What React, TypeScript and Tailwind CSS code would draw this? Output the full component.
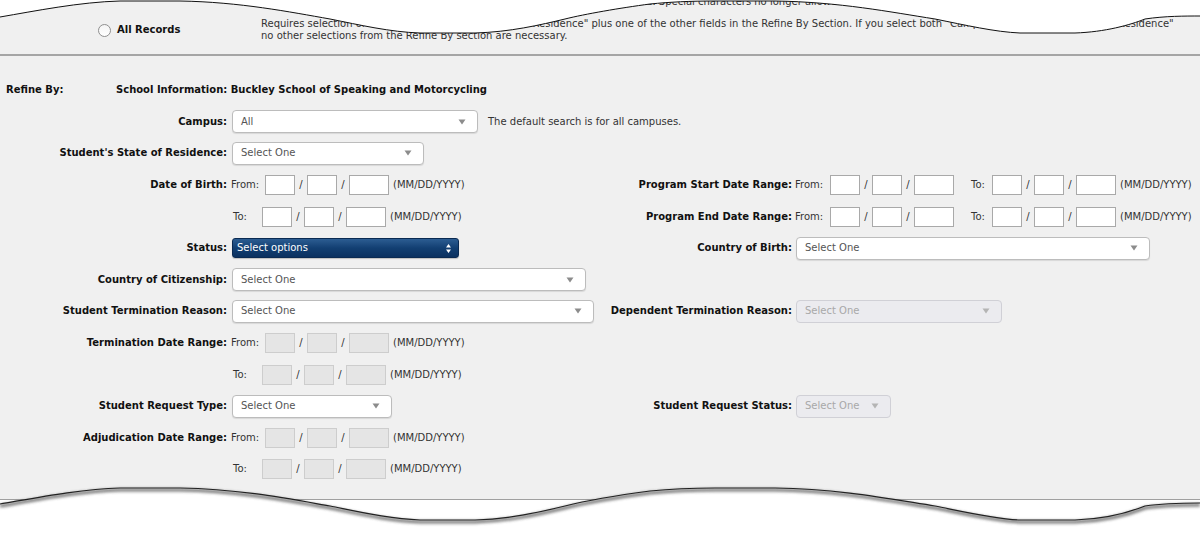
import React from "react";

const Caret = ({ color = "#8c8c8c" }: { color?: string }) => (
  <svg width="8" height="6" viewBox="0 0 8 6">
    <path d="M0.5 0.5h7L4 5.5z" fill={color} />
  </svg>
);

const Select = ({
  className,
  text = "Select One",
  disabled = false,
}: {
  className: string;
  text?: string;
  disabled?: boolean;
}) => (
  <div
    className={`flex h-[23px] shrink-0 items-center justify-between rounded-[4px] border pl-[8px] pr-[11px] ${
      disabled
        ? "border-[#d0d0d6] bg-[#ebebef] text-[#a8a8a8]"
        : "border-[#bcbcbc] bg-white text-[#555] shadow-[0_1px_1px_rgba(0,0,0,0.1)]"
    } ${className}`}
  >
    <span>{text}</span>
    <Caret color={disabled ? "#b4b4b4" : "#8c8c8c"} />
  </div>
);

const Box = ({ w, disabled }: { w: string; disabled?: boolean }) => (
  <div
    className={`h-[20px] shrink-0 border ${w} ${
      disabled ? "border-[#cdcdcd] bg-[#e5e5e5]" : "border-[#a9a9a9] bg-white"
    }`}
  />
);

const DateGroup = ({ disabled }: { disabled?: boolean }) => (
  <div className="flex items-center text-[#333]">
    <Box w="w-[30px]" disabled={disabled} />
    <span className="w-[12px] text-center">/</span>
    <Box w="w-[30px]" disabled={disabled} />
    <span className="w-[12px] text-center">/</span>
    <Box w="w-[40px]" disabled={disabled} />
  </div>
);

const Label = ({ children, right }: { children?: React.ReactNode; right?: boolean }) => (
  <div
    className={`shrink-0 whitespace-nowrap text-right font-bold text-[#111] ${
      right ? "w-[192px]" : "w-[227px]"
    }`}
  >
    {children}
  </div>
);

const Row = ({ children }: { children: React.ReactNode }) => (
  <div className="flex h-[31.6px] items-center">{children}</div>
);

const Left = ({ children }: { children: React.ReactNode }) => (
  <div className="flex w-[600px] shrink-0 items-center whitespace-nowrap">{children}</div>
);

const LeftDate = ({
  label,
  from,
  disabled,
}: {
  label?: string;
  from?: boolean;
  disabled?: boolean;
}) => (
  <Left>
    <Label>{label}</Label>
    <div className="ml-[4px] flex items-center text-[#333]">
      {from ? (
        <span className="w-[34px]">From:</span>
      ) : (
        <span className="w-[31px] pl-[2px]">To:</span>
      )}
      <DateGroup disabled={disabled} />
      <span className="ml-[4px]">(MM/DD/YYYY)</span>
    </div>
  </Left>
);

const RightRange = ({ label }: { label: string }) => (
  <>
    <Label right>{label}</Label>
    <div className="ml-[3px] flex items-center whitespace-nowrap text-[#333]">
      <span className="w-[35px]">From:</span>
      <DateGroup />
      <span className="ml-[17px] w-[21px]">To:</span>
      <DateGroup />
      <span className="ml-[4px]">(MM/DD/YYYY)</span>
    </div>
  </>
);

// torn paper edge, shared by top and bottom
const tear =
  "M0,17 C35,11 80,2 120,1 L180,1 C240,2 290,12 330,19 C360,25 390,32 420,33 L475,33 C510,32 540,25 565,19 C585,14 620,8 650,4 C670,2 690,1 715,1 L775,1 C840,2 890,12 935,19 C965,25 995,32 1020,33 L1075,33 C1105,32 1130,25 1145,19 C1165,16 1185,16 1200,16";

const TopEdge = () => (
  <svg
    className="pointer-events-none absolute left-0 top-0"
    width="1200"
    height="40"
    viewBox="0 0 1200 40"
  >
    <path d={`M0,0 L${tear.slice(1)} L1200,0 Z`} fill="#fff" />
    <path d={tear} fill="none" stroke="#111" strokeWidth="1" />
  </svg>
);

const BottomEdge = () => (
  <svg
    className="pointer-events-none absolute bottom-0 left-0"
    width="1200"
    height="60"
    viewBox="0 0 1200 60"
  >
    <defs>
      <filter id="edgeShadow" x="-5%" y="-50%" width="110%" height="200%">
        <feGaussianBlur stdDeviation="1.6" />
      </filter>
    </defs>
    <g transform="translate(0,11)">
      <path d={`${tear} L1200,60 L0,60 Z`} fill="#fff" />
      <path
        d={tear}
        transform="translate(0,2)"
        fill="none"
        stroke="#444"
        strokeWidth="3"
        opacity="0.75"
        filter="url(#edgeShadow)"
      />
      <path d={tear} fill="none" stroke="#222" strokeWidth="1.2" />
    </g>
  </svg>
);

export default function App() {
  return (
    <div className="relative h-[536px] w-[1200px] overflow-hidden bg-white font-['DejaVu_Sans',Verdana,sans-serif] text-[10px] leading-[12px] text-[#222]">
      <div className="bg-[#f0f0f0]">
        <div className="flex h-[56px] flex-col border-b-2 border-[#a5a5a5]">
          <div className="-mt-[4px] whitespace-nowrap pl-[261px] text-[#333]">
            Enter the student's full name exactly as it appears on the I-20 or SEVIS record. Special characters no longer allowed.
          </div>
          <div className="mt-[10px] flex">
            <div className="flex w-[261px] shrink-0 items-center pl-[98px]">
              <span className="h-[13px] w-[13px] rounded-full border border-[#8f8f8f] bg-gradient-to-b from-[#f4f4f4] to-white" />
              <span className="ml-[6px] font-bold text-[#111]">All Records</span>
            </div>
            <div className="whitespace-nowrap text-[#333]">
              Requires selection of "Campus" or "Student's State of Residence" plus one of the other fields in the Refine By Section. If you select both "Campus" and "Student's State of Residence"
              <br />
              no other selections from the Refine By section are necessary.
            </div>
          </div>
        </div>

        <div className="h-[444px] border-b border-[#a0a0a0] pt-[18.5px]">
          <Row>
            <div className="w-[116px] shrink-0 pl-[6px] font-bold text-[#111]">Refine By:</div>
            <div className="whitespace-nowrap font-bold text-[#111]">
              School Information: Buckley School of Speaking and Motorcycling
            </div>
          </Row>

          <Row>
            <Left>
              <Label>Campus:</Label>
              <Select className="ml-[5px] w-[246px]" text="All" />
              <span className="ml-[10px] text-[#333]">The default search is for all campuses.</span>
            </Left>
          </Row>

          <Row>
            <Left>
              <Label>Student's State of Residence:</Label>
              <Select className="ml-[5px] w-[192px]" />
            </Left>
          </Row>

          <Row>
            <LeftDate label="Date of Birth:" from />
            <RightRange label="Program Start Date Range:" />
          </Row>

          <Row>
            <LeftDate />
            <RightRange label="Program End Date Range:" />
          </Row>

          <Row>
            <Left>
              <Label>Status:</Label>
              <div className="ml-[5px] flex h-[20px] w-[227px] items-center justify-between rounded-[3px] border border-[#0a2a52] bg-gradient-to-b from-[#2c5d92] via-[#123f72] to-[#0b3160] pl-[4px] pr-[7px] text-white shadow-[0_1px_1px_rgba(0,0,0,0.2)]">
                <span>Select options</span>
                <svg width="5" height="9" viewBox="0 0 5 9">
                  <path d="M2.5 0L5 3.5H0z M2.5 9L5 5.5H0z" fill="#fff" />
                </svg>
              </div>
            </Left>
            <Label right>Country of Birth:</Label>
            <Select className="ml-[4px] w-[354px]" />
          </Row>

          <Row>
            <Left>
              <Label>Country of Citizenship:</Label>
              <Select className="ml-[5px] w-[354px]" />
            </Left>
          </Row>

          <Row>
            <Left>
              <Label>Student Termination Reason:</Label>
              <Select className="ml-[5px] w-[362px]" />
            </Left>
            <Label right>Dependent Termination Reason:</Label>
            <Select className="ml-[4px] w-[206px]" disabled />
          </Row>

          <Row>
            <LeftDate label="Termination Date Range:" from disabled />
          </Row>

          <Row>
            <LeftDate disabled />
          </Row>

          <Row>
            <Left>
              <Label>Student Request Type:</Label>
              <Select className="ml-[5px] w-[160px]" />
            </Left>
            <Label right>Student Request Status:</Label>
            <Select className="ml-[4px] w-[95px]" disabled />
          </Row>

          <Row>
            <LeftDate label="Adjudication Date Range:" from disabled />
          </Row>

          <Row>
            <LeftDate disabled />
          </Row>
        </div>
      </div>

      <TopEdge />
      <BottomEdge />
    </div>
  );
}
